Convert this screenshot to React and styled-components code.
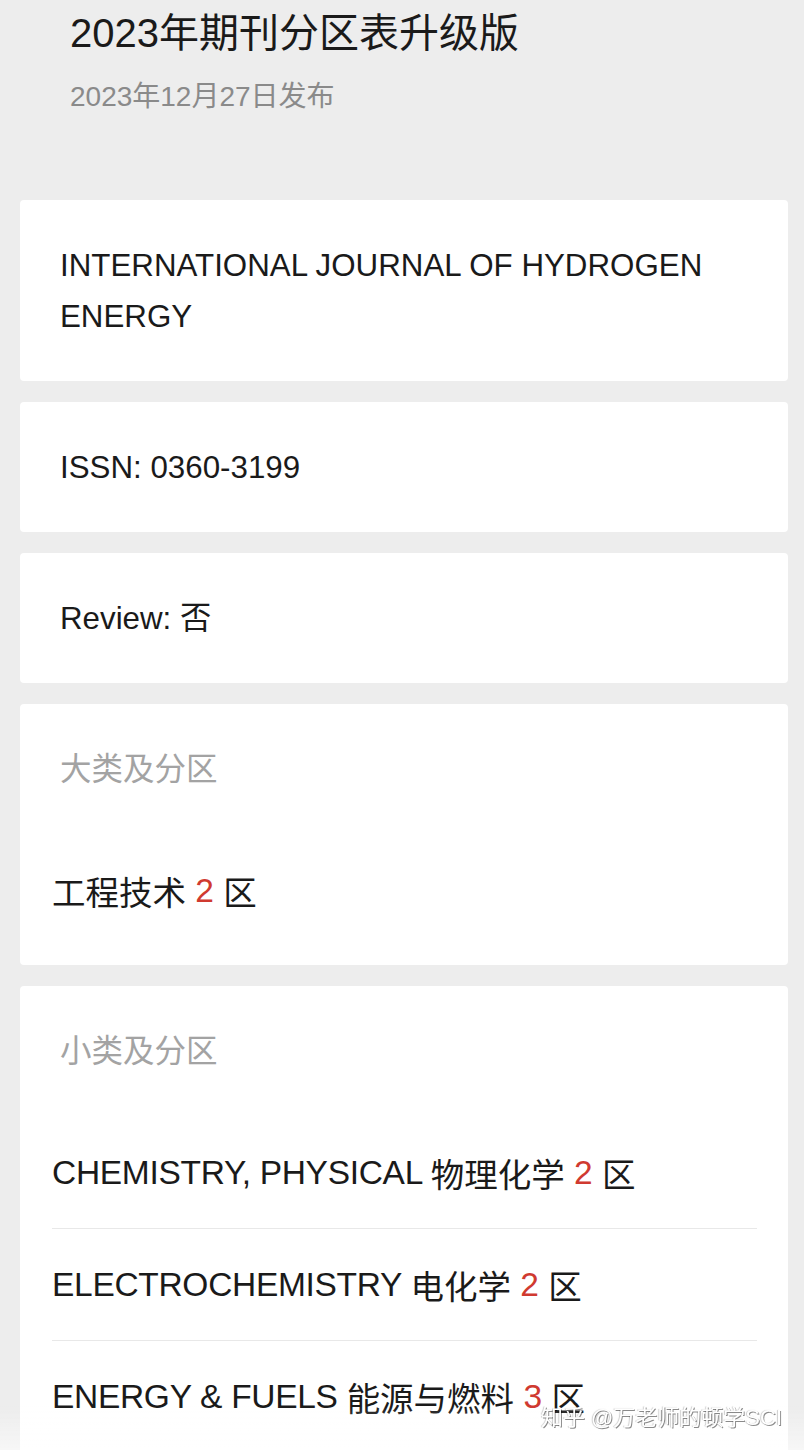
import React from "react";
import styled, { createGlobalStyle } from "styled-components";

const GlobalStyle = createGlobalStyle`
  html, body {
    margin: 0;
    padding: 0;
    background: #ededed;
  }
  body {
    font-family: "Liberation Sans", "Noto Sans CJK SC", sans-serif;
    color: #1a1a1a;
  }
`;

const Page = styled.div`
  padding: 9px 16px 0 20px;
`;

const Header = styled.header`
  padding-left: 50px;
  margin-bottom: 85px;
`;

const Title = styled.h1`
  margin: 0;
  font-size: 40px;
  line-height: 48px;
  font-weight: 400;
  color: #1a1a1a;
`;

const PubDate = styled.div`
  margin-top: 22px;
  font-size: 28px;
  line-height: 36px;
  color: #8a8a8a;
`;

const CardList = styled.div`
  display: flex;
  flex-direction: column;
  gap: 21px;
`;

const Card = styled.section`
  background: #fff;
  border-radius: 4px;
  padding: ${(props) => (props.section ? "40px 31px 19px 32px" : "40px 40px 39px")};
`;

const InfoText = styled.div`
  font-size: 31.3px;
  line-height: 51px;
  color: #1a1a1a;
`;

const SectionTitle = styled.div`
  padding-left: 8px;
  margin-bottom: 40px;
  font-size: 31.5px;
  line-height: 51px;
  color: #a3a3a3;
`;

const Row = styled.div`
  display: flex;
  align-items: center;
  height: 111px;
  font-size: 33.5px;
  color: #1a1a1a;
  white-space: pre;
  border-bottom: 1px solid #e8e8e8;

  &:last-child {
    border-bottom: none;
  }
`;

const Latin = styled.span`
  letter-spacing: -0.3px;
`;

const Zone = styled.span`
  color: #d03a30;
  vertical-align: -3px;
`;

const BottomFade = styled.div`
  position: fixed;
  left: 0;
  right: 0;
  bottom: 0;
  height: 44px;
  background: linear-gradient(to bottom, rgba(255, 255, 255, 0), rgba(255, 255, 255, 0.55));
  pointer-events: none;
`;

const Watermark = styled.div`
  position: fixed;
  right: 22px;
  bottom: 18px;
  font-size: 22px;
  line-height: 28px;
  color: #ffffff;
  text-shadow: 1px 1px 0 rgba(0, 0, 0, 0.45), -1px 0 1px rgba(0, 0, 0, 0.2);
  pointer-events: none;
`;

const bigCategory = [{ en: "", zh: "工程技术", zone: 2 }];

const smallCategories = [
  { en: "CHEMISTRY, PHYSICAL", zh: "物理化学", zone: 2 },
  { en: "ELECTROCHEMISTRY", zh: "电化学", zone: 2 },
  { en: "ENERGY & FUELS", zh: "能源与燃料", zone: 3 }
];

function CategoryCard({ title, items }) {
  return (
    <Card section>
      <SectionTitle>{title}</SectionTitle>
      {items.map((item) => (
        <Row key={item.zh}>
          {item.en && <Latin>{item.en} </Latin>}
          {item.zh} <Zone>{item.zone}</Zone> 区
        </Row>
      ))}
    </Card>
  );
}

export default function App() {
  return (
    <>
      <GlobalStyle />
      <Page>
        <Header>
          <Title>2023年期刊分区表升级版</Title>
          <PubDate>2023年12月27日发布</PubDate>
        </Header>
        <CardList>
          <Card>
            <InfoText>INTERNATIONAL JOURNAL OF HYDROGEN ENERGY</InfoText>
          </Card>
          <Card>
            <InfoText>ISSN: 0360-3199</InfoText>
          </Card>
          <Card>
            <InfoText>Review: 否</InfoText>
          </Card>
          <CategoryCard title="大类及分区" items={bigCategory} />
          <CategoryCard title="小类及分区" items={smallCategories} />
        </CardList>
      </Page>
      <BottomFade />
      <Watermark>知乎 @万老师的顿学SCI</Watermark>
    </>
  );
}
